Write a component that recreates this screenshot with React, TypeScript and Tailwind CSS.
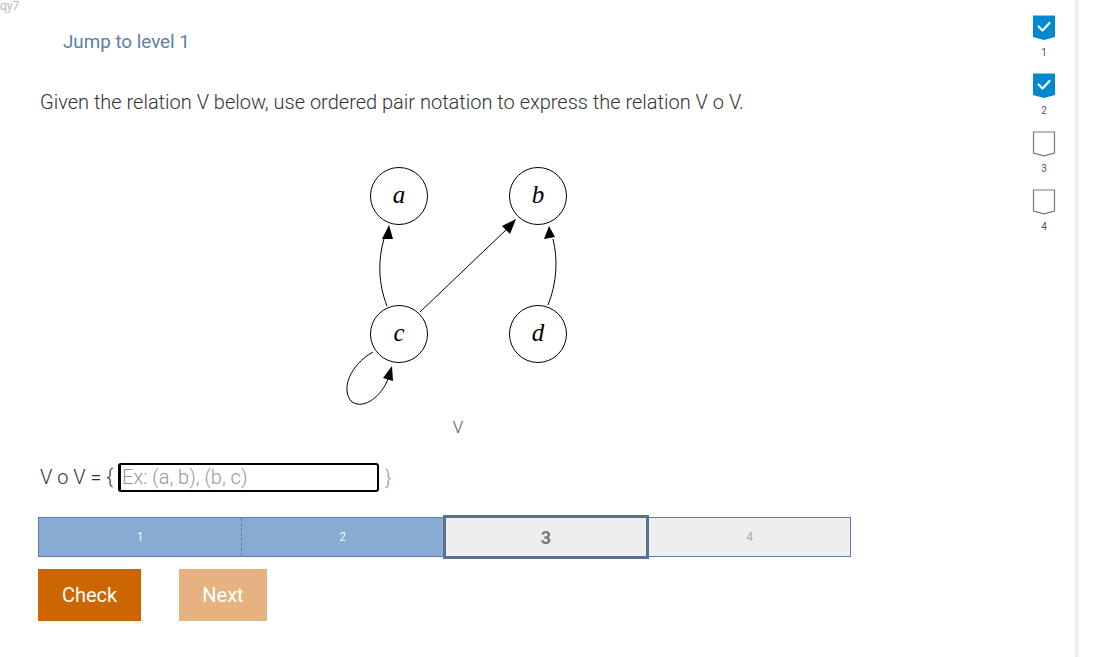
import React from 'react'

const FONT = { fontFamily: 'Roboto, "Liberation Sans", sans-serif' }

type Step = { n: number; done: boolean }

const steps: Step[] = [
  { n: 1, done: true },
  { n: 2, done: true },
  { n: 3, done: false },
  { n: 4, done: false },
]

function StepFlag({ done }: { done: boolean }) {
  return (
    <svg width="24" height="26" viewBox="0 0 24 26">
      {done ? (
        <>
          <path d="M1 0.5 H23 V22 L12 25 L1 22 Z" fill="#0288d1" />
          <path d="M6.5 11.5 L10.5 15.5 L17.5 8" fill="none" stroke="#fff" strokeWidth="2.2" strokeLinecap="round" strokeLinejoin="round" />
        </>
      ) : (
        <path d="M1.5 1 H22.5 V22 L12 24.8 L1.5 22 Z" fill="#fff" stroke="#777" strokeWidth="1.2" />
      )}
    </svg>
  )
}

function Graph() {
  // coordinates relative to svg origin at page (330,155)
  const node = (cx: number, cy: number, label: string) => (
    <g key={label}>
      <circle cx={cx} cy={cy} r={28.5} fill="#fff" stroke="#000" strokeWidth="1" />
      <text
        x={cx}
        y={cy + 7}
        textAnchor="middle"
        fontSize="25"
        fontStyle="italic"
        fontFamily='"Liberation Serif", "DejaVu Serif", serif'
        fill="#000"
      >
        {label}
      </text>
    </g>
  )
  return (
    <svg width="260" height="260" viewBox="0 0 260 260">
      {/* c -> a */}
      <path d="M57 151 C48 128 48 105 54 84" fill="none" stroke="#000" strokeWidth="1" />
      <polygon points="59,70 52,84 63,84" fill="#000" />
      {/* c -> b */}
      <line x1="90" y1="157" x2="178" y2="73" stroke="#000" strokeWidth="1" />
      <polygon points="186,64 172,71 180,79" fill="#000" />
      {/* d -> b */}
      <path d="M218 150 C227 128 228 104 223 84" fill="none" stroke="#000" strokeWidth="1" />
      <polygon points="219,71 214,84 225,82" fill="#000" />
      {/* c -> c loop */}
      <path d="M43 197 C20 210 10 235 22 247 C35 255 52 240 58 224" fill="none" stroke="#000" strokeWidth="1" />
      <polygon points="62,211 53,223 63,226" fill="#000" />
      {node(69, 41, 'a')}
      {node(208, 41, 'b')}
      {node(69, 179, 'c')}
      {node(208, 179, 'd')}
    </svg>
  )
}

export default function App() {
  return (
    <div className="flex h-[657px] w-[1106px] overflow-hidden bg-white" style={FONT}>
      <div className="relative flex w-[1075px] shrink-0">
        <div className="flex-1">
          <div className="h-[14px] pl-0 text-[12px] leading-[12px] text-[#bbb]">qy7</div>
          <div className="pl-[63px] pt-[17px] text-[18.8px] leading-[22px] text-[#5b7ea8]">Jump to level 1</div>
          <div className="pl-[40px] pt-[37px] text-[20px] font-light leading-[24px] text-[#333]">
            Given the relation V below, use ordered pair notation to express the relation V o V.
          </div>
          <div className="ml-[330px] mt-[41px] flex w-[260px] flex-col items-center">
            <Graph />
            <div className="mt-[2px] pr-[4px] text-[17px] font-light leading-[20px] text-[#555]">V</div>
          </div>
          <div className="mt-[25px] flex items-center pl-[40px] text-[20px] font-light text-[#333]">
            <span className="mr-[5px]">V o V = {'{'}</span>
            <div className="flex h-[29px] w-[261px] items-center rounded-[3px] border-2 border-l-[3px] border-black pl-[1px] text-[#999]">
              Ex: (a, b), (b, c)
            </div>
            <span className="ml-[6px] text-[#999]">{'}'}</span>
          </div>
          <div className="ml-[38px] mt-[25px] flex h-[40px] w-[813px] items-stretch">
            <div className="flex w-[203px] items-center justify-center border-y border-l border-[#5b7ea6] bg-[#87abd2] text-[12px] text-[#eef3fa]">
              1
            </div>
            <div className="flex w-[202px] items-center justify-center border-y border-[#5b7ea6] bg-[#87abd2] text-[12px] text-[#eef3fa]">
              <div className="relative flex h-full w-full items-center justify-center border-l border-dashed border-[#5b7ea6]">
                2
              </div>
            </div>
            <div className="relative w-[206px]">
              <div className="absolute inset-x-0 -inset-y-[2px] flex items-center justify-center border-[3px] border-[#5a7193] bg-[#eee] text-[18px] font-bold text-[#777]">
                3
              </div>
            </div>
            <div className="flex w-[202px] items-center justify-center border-y border-r border-[#5b7ea6] bg-[#eee] text-[12px] text-[#aaa]">
              4
            </div>
          </div>
          <div className="mt-[12px] flex pl-[38px]">
            <button className="h-[52px] w-[103px] bg-[#cc6600] text-[20px] text-white">Check</button>
            <button className="ml-[38px] h-[52px] w-[88px] bg-[#e6b380] text-[20px] text-white">Next</button>
          </div>
        </div>
        <div className="flex w-[43px] shrink-0 flex-col items-start pt-[15px]">
          {steps.map((s) => (
            <div key={s.n} className="flex h-[58px] w-[24px] flex-col items-center">
              <StepFlag done={s.done} />
              <div className="mt-[6px] text-[10px] leading-[12px] text-[#555]">{s.n}</div>
            </div>
          ))}
        </div>
      </div>
      <div className="w-[4px] shrink-0 bg-gradient-to-r from-[#e8e8e8] to-[#f7f7f7]" />
      <div className="flex-1 bg-white" />
    </div>
  )
}
